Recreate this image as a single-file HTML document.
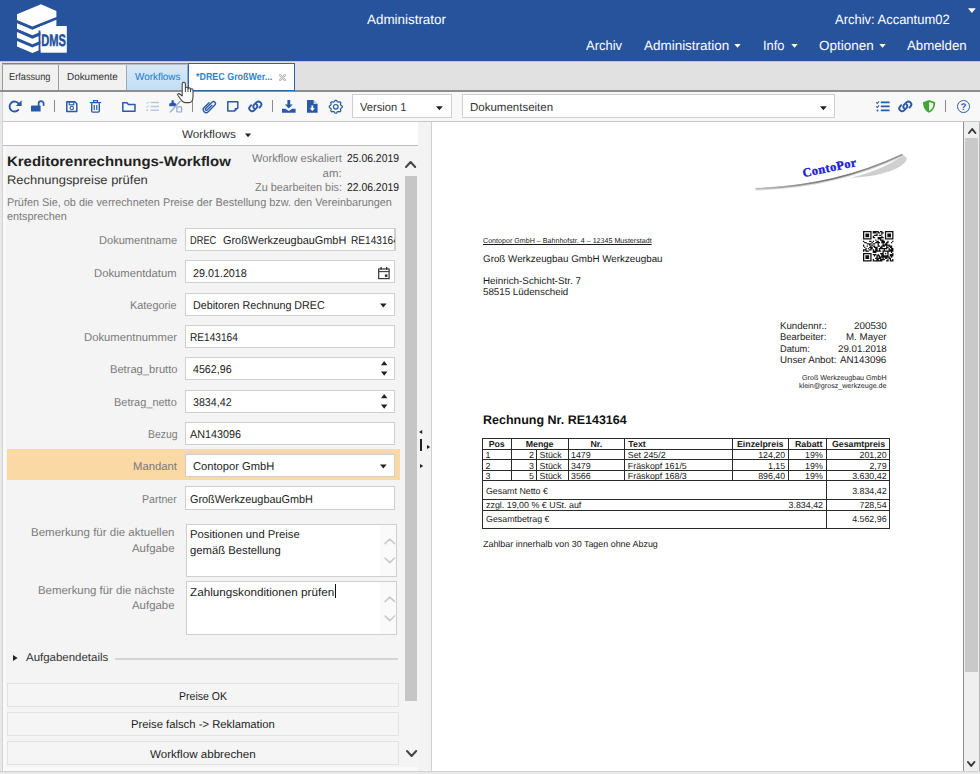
<!DOCTYPE html>
<html><head><meta charset="utf-8"><title>DMS</title>
<style>
html,body{margin:0;padding:0;}
body{width:980px;height:774px;overflow:hidden;position:relative;background:#e9e9e9;font-family:"Liberation Sans",sans-serif;text-rendering:geometricPrecision;}
.t{position:absolute;white-space:pre;line-height:20px;transform-origin:0 0;}
.b{position:absolute;box-sizing:border-box;}
svg{position:absolute;overflow:visible;}
</style></head><body>
<div class="b" style="left:0.00px;top:0.00px;width:980.00px;height:60.80px;background:#26539b;"></div>
<div class="b" style="left:0.00px;top:60.80px;width:980.00px;height:1.60px;background:#c3c5c8;"></div>
<div class="b" style="left:0.00px;top:62.40px;width:980.00px;height:28.00px;background:#e1e1e1;"></div>
<div class="b" style="left:0.00px;top:90.00px;width:980.00px;height:31.80px;background:#f8f8f8;border-bottom:1.4px solid #c6c6c6;"></div>
<div class="b" style="left:0.00px;top:62.00px;width:2.20px;height:712.00px;background:#e8e8e8;"></div>
<div class="b" style="left:2.20px;top:62.00px;width:0.80px;height:712.00px;background:#d2d2d2;"></div>
<span class="t" style="left:366.50px;top:10px;font-size:13.6px;color:#fff;transform:scaleX(0.9861);">Administrator</span>
<span class="t" style="left:835.10px;top:10px;font-size:13.6px;color:#fff;transform:scaleX(0.9543);">Archiv: Accantum02</span>
<span class="t" style="left:586.10px;top:36px;font-size:13.4px;color:#fff;transform:scaleX(0.9697);">Archiv</span>
<span class="t" style="left:643.70px;top:36px;font-size:13.4px;color:#fff;transform:scaleX(1.0047);">Administration</span>
<span class="t" style="left:762.70px;top:36px;font-size:13.4px;color:#fff;transform:scaleX(0.9619);">Info</span>
<span class="t" style="left:818.80px;top:36px;font-size:13.4px;color:#fff;transform:scaleX(1.0058);">Optionen</span>
<span class="t" style="left:907.00px;top:36px;font-size:13.4px;color:#fff;transform:scaleX(0.9894);">Abmelden</span>
<svg style="left:734.2px;top:43.6px" width="7" height="3.8" viewBox="0 0 10 6"><path d="M0 0H10L5 6Z" fill="#fff"/></svg>
<svg style="left:791.0px;top:43.6px" width="7" height="3.8" viewBox="0 0 10 6"><path d="M0 0H10L5 6Z" fill="#fff"/></svg>
<svg style="left:879.4px;top:43.6px" width="7" height="3.8" viewBox="0 0 10 6"><path d="M0 0H10L5 6Z" fill="#fff"/></svg>
<svg style="left:967.8px;top:8.2px" width="7.8" height="5.4" viewBox="0 0 10 6"><path d="M0 0H10L5 6Z" fill="#fff"/></svg>
<div class="b" style="left:1.80px;top:63.50px;width:57.40px;height:27.00px;background:#f1f1f1;border:1px solid #9a9a9a;border-bottom:none;"></div>
<div class="b" style="left:58.20px;top:63.50px;width:69.00px;height:27.00px;background:#f1f1f1;border:1px solid #9a9a9a;border-bottom:none;"></div>
<div class="b" style="left:126.20px;top:63.50px;width:62.00px;height:27.00px;background:linear-gradient(#d6e9f8,#c2def4);border:1px solid #9ab;border-bottom:none;"></div>
<div class="b" style="left:1.80px;top:63.00px;width:186.00px;height:1.00px;background:#848484;"></div>
<div class="b" style="left:1.80px;top:64.00px;width:186.00px;height:1.00px;background:#bdbdbd;"></div>
<div class="b" style="left:0.00px;top:90.00px;width:980.00px;height:1.60px;background:#8e8e8e;"></div>
<div class="b" style="left:187.60px;top:63.20px;width:107.20px;height:28.00px;background:#fff;border:1.5px solid #3560ac;"></div>
<span class="t" style="left:9.30px;top:68px;font-size:10.1px;color:#333;transform:scaleX(0.9126);">Erfassung</span>
<span class="t" style="left:67.30px;top:68px;font-size:10.1px;color:#333;transform:scaleX(0.9816);">Dokumente</span>
<span class="t" style="left:134.70px;top:68px;font-size:10.1px;color:#1c78c8;transform:scaleX(0.9808);">Workflows</span>
<span class="t" style="left:196.30px;top:68px;font-size:10.2px;color:#2b86d2;transform:scaleX(0.8749);font-weight:bold;">*DREC GroßWer...</span>
<div class="b" style="left:3.00px;top:121.50px;width:415.20px;height:649.20px;background:#f4f4f4;border-left:3.4px solid #f9f9f9;border-bottom:4.4px solid #f9f9f9;"></div>
<div class="b" style="left:2.60px;top:121.50px;width:415.60px;height:24.40px;background:#fff;border-bottom:1.4px solid #bdbdbd;"></div>
<span class="t" style="left:182.00px;top:125px;font-size:11.4px;color:#333;transform:scaleX(1.0274);">Workflows</span>
<svg style="left:244.5px;top:132.6px" width="6.1" height="4.8" viewBox="0 0 10 6"><path d="M0 0H10L5 6Z" fill="#222"/></svg>
<span class="t" style="left:7.20px;top:152px;font-size:13.8px;color:#222;transform:scaleX(1.0824);font-weight:bold;">Kreditorenrechnungs-Workflow</span>
<span class="t" style="left:7.20px;top:170px;font-size:12.3px;color:#333;transform:scaleX(1.0506);">Rechnungspreise prüfen</span>
<span class="t" style="left:7.20px;top:193px;font-size:11.2px;color:#7a7a7a;transform:scaleX(0.9715);">Prüfen Sie, ob die verrechneten Preise der Bestellung bzw. den Vereinbarungen</span>
<span class="t" style="left:7.20px;top:207px;font-size:11.2px;color:#7a7a7a;transform:scaleX(0.9701);">entsprechen</span>
<span class="t" style="left:251.60px;top:149px;font-size:11.4px;color:#7a7a7a;transform:scaleX(0.9753);">Workflow eskaliert</span>
<span class="t" style="left:322.60px;top:164px;font-size:11.4px;color:#7a7a7a;">am:</span>
<span class="t" style="left:254.50px;top:178px;font-size:11.4px;color:#7a7a7a;transform:scaleX(0.9545);">Zu bearbeiten bis:</span>
<span class="t" style="left:347.30px;top:149px;font-size:11.4px;color:#222;transform:scaleX(0.9114);">25.06.2019</span>
<span class="t" style="left:347.30px;top:178px;font-size:11.4px;color:#222;transform:scaleX(0.9114);">22.06.2019</span>
<div class="b" style="left:404.90px;top:176.00px;width:12.30px;height:524.70px;background:#c6c6c6;"></div>
<svg style="left:406.4px;top:161.6px" width="9.2" height="5.0"><path d="M0 5.0 L4.6 0 L9.2 5.0" fill="none" stroke="#444" stroke-width="2.0" stroke-linecap="round" stroke-linejoin="round"/></svg>
<svg style="left:406.5px;top:751px" width="9.2" height="5.0"><path d="M0 0 L4.6 5.0 L9.2 0" fill="none" stroke="#444" stroke-width="2.0" stroke-linecap="round" stroke-linejoin="round"/></svg>
<div class="b" style="left:7.20px;top:448.70px;width:392.60px;height:31.60px;background:#fbd9a4;"></div>
<div class="b" style="left:185.20px;top:228.00px;width:210.30px;height:23.20px;background:#fff;border:1px solid #cfcfcf;overflow:hidden;"></div>
<span class="t" style="left:98.80px;top:231px;font-size:11.4px;color:#7a7a7a;transform:scaleX(0.9717);">Dokumentname</span>
<span class="t" style="left:189.60px;top:231px;font-size:11.3px;color:#222;transform:scaleX(0.8214);">DREC</span>
<span class="t" style="left:222.50px;top:231px;font-size:11.3px;color:#222;transform:scaleX(0.9640);">GroßWerkzeugbauGmbH</span>
<span class="t" style="left:351.00px;top:231px;font-size:11.3px;color:#222;transform:scaleX(0.8969);">RE143164</span>
<div class="b" style="left:394.50px;top:228.00px;width:10.00px;height:23.20px;background:#f4f4f4;"></div>
<div class="b" style="left:394.50px;top:228.00px;width:1.00px;height:23.20px;background:#cfcfcf;"></div>
<div class="b" style="left:185.20px;top:260.30px;width:210.30px;height:23.20px;background:#fff;border:1px solid #cfcfcf;overflow:hidden;"></div>
<span class="t" style="left:94.30px;top:264px;font-size:11.4px;color:#7a7a7a;transform:scaleX(0.9887);">Dokumentdatum</span>
<span class="t" style="left:192.70px;top:264px;font-size:11.3px;color:#222;transform:scaleX(0.9513);">29.01.2018</span>
<svg style="left:377.8px;top:266.90000000000003px" width="11.8" height="12.4" viewBox="0 0 12 12.4"><rect x="0.7" y="1.9" width="10.6" height="9.8" fill="none" stroke="#333" stroke-width="1.2"/><path d="M0.7 4.6H11.3" stroke="#333" stroke-width="1.1"/><path d="M3.2 0V2.6M8.8 0V2.6" stroke="#333" stroke-width="1.3"/><rect x="7" y="7.4" width="2.6" height="2.6" fill="#333"/></svg>
<div class="b" style="left:185.20px;top:292.60px;width:210.30px;height:23.20px;background:#fff;border:1px solid #cfcfcf;overflow:hidden;"></div>
<span class="t" style="left:130.40px;top:296px;font-size:11.4px;color:#7a7a7a;transform:scaleX(0.9549);">Kategorie</span>
<span class="t" style="left:192.70px;top:296px;font-size:11.3px;color:#222;transform:scaleX(0.9495);">Debitoren Rechnung DREC</span>
<svg style="left:380.4px;top:302.6px" width="6.6" height="5.2" viewBox="0 0 10 6"><path d="M0 0H10L5 6Z" fill="#222"/></svg>
<div class="b" style="left:185.20px;top:324.90px;width:210.30px;height:23.20px;background:#fff;border:1px solid #cfcfcf;overflow:hidden;"></div>
<span class="t" style="left:84.00px;top:328px;font-size:11.4px;color:#7a7a7a;transform:scaleX(0.9918);">Dokumentnummer</span>
<span class="t" style="left:189.60px;top:328px;font-size:11.3px;color:#222;transform:scaleX(0.8969);">RE143164</span>
<div class="b" style="left:185.20px;top:357.20px;width:210.30px;height:23.20px;background:#fff;border:1px solid #cfcfcf;overflow:hidden;"></div>
<span class="t" style="left:109.50px;top:360px;font-size:11.4px;color:#7a7a7a;transform:scaleX(0.9771);">Betrag_brutto</span>
<span class="t" style="left:192.70px;top:360px;font-size:11.3px;color:#222;transform:scaleX(0.9450);">4562,96</span>
<svg style="left:380.7px;top:361.4px" width="6.4" height="15"><path d="M0 4.2H6.4L3.2 0Z M0 10.6H6.4L3.2 14.8Z" fill="#222"/></svg>
<div class="b" style="left:185.20px;top:389.50px;width:210.30px;height:23.20px;background:#fff;border:1px solid #cfcfcf;overflow:hidden;"></div>
<span class="t" style="left:114.20px;top:393px;font-size:11.4px;color:#7a7a7a;transform:scaleX(0.9620);">Betrag_netto</span>
<span class="t" style="left:192.70px;top:393px;font-size:11.3px;color:#222;transform:scaleX(0.9450);">3834,42</span>
<svg style="left:380.7px;top:393.7px" width="6.4" height="15"><path d="M0 4.2H6.4L3.2 0Z M0 10.6H6.4L3.2 14.8Z" fill="#222"/></svg>
<div class="b" style="left:185.20px;top:421.80px;width:210.30px;height:23.20px;background:#fff;border:1px solid #cfcfcf;overflow:hidden;"></div>
<span class="t" style="left:147.50px;top:425px;font-size:11.4px;color:#7a7a7a;transform:scaleX(0.9126);">Bezug</span>
<span class="t" style="left:189.60px;top:425px;font-size:11.3px;color:#222;transform:scaleX(0.9531);">AN143096</span>
<div class="b" style="left:185.20px;top:454.10px;width:210.30px;height:23.20px;background:#fff;border:1px solid #cfcfcf;overflow:hidden;"></div>
<span class="t" style="left:133.00px;top:457px;font-size:11.4px;color:#7a7a7a;transform:scaleX(0.9918);">Mandant</span>
<span class="t" style="left:192.70px;top:457px;font-size:11.3px;color:#222;transform:scaleX(0.9882);">Contopor GmbH</span>
<svg style="left:380.4px;top:464.09999999999997px" width="6.6" height="5.2" viewBox="0 0 10 6"><path d="M0 0H10L5 6Z" fill="#222"/></svg>
<div class="b" style="left:185.20px;top:486.40px;width:210.30px;height:23.20px;background:#fff;border:1px solid #cfcfcf;overflow:hidden;"></div>
<span class="t" style="left:142.20px;top:490px;font-size:11.4px;color:#7a7a7a;transform:scaleX(0.9309);">Partner</span>
<span class="t" style="left:189.60px;top:490px;font-size:11.3px;color:#222;transform:scaleX(0.9609);">GroßWerkzeugbauGmbH</span>
<div class="b" style="left:186.20px;top:523.60px;width:210.70px;height:53.60px;background:#fff;border:1px solid #cfcfcf;"></div>
<div class="b" style="left:186.20px;top:581.40px;width:210.70px;height:53.30px;background:#fff;border:1px solid #cfcfcf;"></div>
<div class="b" style="left:379.70px;top:524.60px;width:16.20px;height:51.60px;background:#fafafa;"></div>
<div class="b" style="left:379.70px;top:582.40px;width:16.20px;height:51.30px;background:#fafafa;"></div>
<svg style="left:384.8px;top:538.6px" width="9.6" height="4.6"><path d="M0 4.6 L4.8 0 L9.6 4.6" fill="none" stroke="#c8c8c8" stroke-width="1.5" stroke-linecap="round" stroke-linejoin="round"/></svg>
<svg style="left:384.8px;top:557.8px" width="9.6" height="4.6"><path d="M0 0 L4.8 4.6 L9.6 0" fill="none" stroke="#c8c8c8" stroke-width="1.5" stroke-linecap="round" stroke-linejoin="round"/></svg>
<svg style="left:384.8px;top:596.6px" width="9.6" height="4.6"><path d="M0 4.6 L4.8 0 L9.6 4.6" fill="none" stroke="#c8c8c8" stroke-width="1.5" stroke-linecap="round" stroke-linejoin="round"/></svg>
<svg style="left:384.8px;top:615.8px" width="9.6" height="4.6"><path d="M0 0 L4.8 4.6 L9.6 0" fill="none" stroke="#c8c8c8" stroke-width="1.5" stroke-linecap="round" stroke-linejoin="round"/></svg>
<span class="t" style="left:31.40px;top:523px;font-size:11.4px;color:#7a7a7a;transform:scaleX(1.0116);">Bemerkung für die aktuellen</span>
<span class="t" style="left:132.40px;top:539px;font-size:11.4px;color:#7a7a7a;transform:scaleX(1.0030);">Aufgabe</span>
<span class="t" style="left:38.40px;top:581px;font-size:11.4px;color:#7a7a7a;transform:scaleX(1.0026);">Bemerkung für die nächste</span>
<span class="t" style="left:132.40px;top:596px;font-size:11.4px;color:#7a7a7a;transform:scaleX(1.0030);">Aufgabe</span>
<span class="t" style="left:190.40px;top:525px;font-size:11.3px;color:#222;transform:scaleX(0.9988);">Positionen und Preise</span>
<span class="t" style="left:190.40px;top:541px;font-size:11.3px;color:#222;transform:scaleX(0.9980);">gemäß Bestellung</span>
<span class="t" style="left:190.40px;top:583px;font-size:11.3px;color:#222;transform:scaleX(1.0346);">Zahlungskonditionen prüfen</span>
<div class="b" style="left:335.20px;top:583.60px;width:1.00px;height:14.40px;background:#111;"></div>
<svg style="left:13.2px;top:654.6px" width="4.6" height="6"><path d="M0 0L4.6 3L0 6Z" fill="#222"/></svg>
<span class="t" style="left:25.70px;top:648px;font-size:11.4px;color:#333;transform:scaleX(1.0065);">Aufgabendetails</span>
<div class="b" style="left:114.60px;top:658.40px;width:283.80px;height:1.20px;background:#d4d4d4;"></div>
<div class="b" style="left:7.20px;top:683.20px;width:392.20px;height:23.50px;background:#f5f5f5;border:1px solid #e3e3e3;"></div>
<div class="b" style="left:7.20px;top:712.30px;width:392.20px;height:23.50px;background:#f5f5f5;border:1px solid #e3e3e3;"></div>
<div class="b" style="left:7.20px;top:741.30px;width:392.20px;height:23.50px;background:#f5f5f5;border:1px solid #e3e3e3;"></div>
<span class="t" style="left:179.00px;top:687px;font-size:11.4px;color:#222;transform:scaleX(0.9239);">Preise OK</span>
<span class="t" style="left:131.00px;top:715px;font-size:11.4px;color:#222;transform:scaleX(0.9896);">Preise falsch -&gt; Reklamation</span>
<span class="t" style="left:150.30px;top:745px;font-size:11.4px;color:#222;transform:scaleX(1.0192);">Workflow abbrechen</span>
<div class="b" style="left:0.00px;top:770.60px;width:980.00px;height:1.20px;background:#d2d2d2;"></div>
<div class="b" style="left:0.00px;top:771.80px;width:980.00px;height:2.20px;background:#e8e8e8;"></div>
<div class="b" style="left:418.20px;top:121.50px;width:13.00px;height:649.20px;background:#f3f3f3;"></div>
<svg style="left:419.2px;top:429.6px" width="3.2" height="4"><path d="M3.2 0L0 2L3.2 4Z" fill="#222"/></svg>
<div class="b" style="left:419.80px;top:438.80px;width:2.40px;height:12.40px;background:#222;"></div>
<svg style="left:426.6px;top:444.6px" width="3.2" height="4"><path d="M0 0L3.2 2L0 4Z" fill="#222"/></svg>
<svg style="left:419.8px;top:463.6px" width="3.2" height="4"><path d="M0 0L3.2 2L0 4Z" fill="#222"/></svg>
<div class="b" style="left:431.00px;top:121.80px;width:533.00px;height:648.80px;background:#fff;border-left:1px solid #d0d0d0;"></div>
<div class="b" style="left:962.90px;top:121.80px;width:17.10px;height:648.80px;background:#efefef;border-left:1.1px solid #909090;border-right:0.9px solid #b4b4b4;"></div>
<div class="b" style="left:965.40px;top:137.80px;width:12.80px;height:534.10px;background:#c9c9c9;"></div>
<svg style="left:968.5px;top:128.5px" width="6.4" height="4.0"><path d="M0 4.0 L3.2 0 L6.4 4.0" fill="none" stroke="#3a3a3a" stroke-width="2.0" stroke-linecap="round" stroke-linejoin="round"/></svg>
<svg style="left:968.3px;top:762px" width="6.4" height="4.0"><path d="M0 0 L3.2 4.0 L6.4 0" fill="none" stroke="#3a3a3a" stroke-width="2.0" stroke-linecap="round" stroke-linejoin="round"/></svg>
<span class="t" style="left:482.80px;top:231px;font-size:7.14px;color:#1a1a1a;transform:scaleX(0.9995);text-decoration:underline;">Contopor GmbH – Bahnhofstr. 4 – 12345 Musterstadt</span>
<span class="t" style="left:482.80px;top:250px;font-size:9.8px;color:#1a1a1a;transform:scaleX(1.0012);">Groß Werkzeugbau GmbH Werkzeugbau</span>
<span class="t" style="left:482.80px;top:272px;font-size:9.8px;color:#1a1a1a;transform:scaleX(1.0042);">Heinrich-Schicht-Str. 7</span>
<span class="t" style="left:482.80px;top:283px;font-size:9.8px;color:#1a1a1a;transform:scaleX(0.9970);">58515 Lüdenscheid</span>
<span class="t" style="left:779.60px;top:317px;font-size:9.8px;color:#1a1a1a;transform:scaleX(0.9872);">Kundennr.:</span>
<span class="t" style="left:853.90px;top:317px;font-size:9.8px;color:#1a1a1a;transform:scaleX(1.0030);">200530</span>
<span class="t" style="left:779.60px;top:328px;font-size:9.8px;color:#1a1a1a;transform:scaleX(0.9679);">Bearbeiter:</span>
<span class="t" style="left:846.10px;top:328px;font-size:9.8px;color:#1a1a1a;transform:scaleX(0.9942);">M. Mayer</span>
<span class="t" style="left:779.60px;top:340px;font-size:9.8px;color:#1a1a1a;transform:scaleX(0.9466);">Datum:</span>
<span class="t" style="left:837.90px;top:340px;font-size:9.8px;color:#1a1a1a;transform:scaleX(0.9949);">29.01.2018</span>
<span class="t" style="left:779.60px;top:351px;font-size:9.8px;color:#1a1a1a;transform:scaleX(0.9955);">Unser Anbot:</span>
<span class="t" style="left:840.40px;top:351px;font-size:9.8px;color:#1a1a1a;transform:scaleX(0.9997);">AN143096</span>
<span class="t" style="left:801.90px;top:368px;font-size:7.14px;color:#1a1a1a;transform:scaleX(1.0002);">Groß Werkzeugbau GmbH</span>
<span class="t" style="left:799.00px;top:376px;font-size:7.14px;color:#1a1a1a;transform:scaleX(0.9987);">klein@grosz_werkzeuge.de</span>
<span class="t" style="left:482.80px;top:410px;font-size:12.5px;color:#111;transform:scaleX(0.9993);font-weight:bold;">Rechnung Nr. RE143164</span>
<span class="t" style="left:482.80px;top:534px;font-size:8.9px;color:#1a1a1a;transform:scaleX(1.0045);">Zahlbar innerhalb von 30 Tagen ohne Abzug</span>
<div class="b" style="left:482.30px;top:438.10px;width:407.60px;height:1.00px;background:#2a2a2a;"></div>
<div class="b" style="left:482.30px;top:448.50px;width:407.60px;height:1.00px;background:#2a2a2a;"></div>
<div class="b" style="left:482.30px;top:459.10px;width:407.60px;height:1.00px;background:#2a2a2a;"></div>
<div class="b" style="left:482.30px;top:469.80px;width:407.60px;height:1.00px;background:#2a2a2a;"></div>
<div class="b" style="left:482.30px;top:480.40px;width:407.60px;height:1.00px;background:#2a2a2a;"></div>
<div class="b" style="left:482.30px;top:499.00px;width:407.60px;height:1.00px;background:#2a2a2a;"></div>
<div class="b" style="left:482.30px;top:509.50px;width:407.60px;height:1.00px;background:#2a2a2a;"></div>
<div class="b" style="left:482.30px;top:527.90px;width:407.60px;height:1.00px;background:#2a2a2a;"></div>
<div class="b" style="left:481.80px;top:438.60px;width:1.00px;height:89.80px;background:#2a2a2a;"></div>
<div class="b" style="left:889.40px;top:438.60px;width:1.00px;height:89.80px;background:#2a2a2a;"></div>
<div class="b" style="left:510.60px;top:438.60px;width:1.00px;height:42.30px;background:#2a2a2a;"></div>
<div class="b" style="left:567.60px;top:438.60px;width:1.00px;height:42.30px;background:#2a2a2a;"></div>
<div class="b" style="left:624.00px;top:438.60px;width:1.00px;height:42.30px;background:#2a2a2a;"></div>
<div class="b" style="left:731.60px;top:438.60px;width:1.00px;height:42.30px;background:#2a2a2a;"></div>
<div class="b" style="left:787.90px;top:438.60px;width:1.00px;height:42.30px;background:#2a2a2a;"></div>
<div class="b" style="left:535.70px;top:449.00px;width:1.00px;height:31.90px;background:#2a2a2a;"></div>
<div class="b" style="left:825.90px;top:438.60px;width:1.00px;height:89.80px;background:#2a2a2a;"></div>
<span class="t" style="left:488.63px;top:434px;font-size:8.8px;color:#1a1a1a;font-weight:bold;">Pos</span>
<span class="t" style="left:525.67px;top:434px;font-size:8.8px;color:#1a1a1a;font-weight:bold;">Menge</span>
<span class="t" style="left:590.43px;top:434px;font-size:8.8px;color:#1a1a1a;font-weight:bold;">Nr.</span>
<span class="t" style="left:628.30px;top:434px;font-size:8.8px;color:#1a1a1a;font-weight:bold;">Text</span>
<span class="t" style="left:737.20px;top:434px;font-size:8.8px;color:#1a1a1a;transform:scaleX(1.0008);font-weight:bold;">Einzelpreis</span>
<span class="t" style="left:794.50px;top:434px;font-size:8.8px;color:#1a1a1a;transform:scaleX(1.0007);font-weight:bold;">Rabatt</span>
<span class="t" style="left:831.50px;top:434px;font-size:8.8px;color:#1a1a1a;transform:scaleX(0.9978);font-weight:bold;">Gesamtpreis</span>
<span class="t" style="left:485.60px;top:445px;font-size:8.85px;color:#1a1a1a;">1</span>
<span class="t" style="left:528.88px;top:445px;font-size:8.85px;color:#1a1a1a;">2</span>
<span class="t" style="left:539.60px;top:445px;font-size:8.85px;color:#1a1a1a;">Stück</span>
<span class="t" style="left:571.00px;top:445px;font-size:8.85px;color:#1a1a1a;">1479</span>
<span class="t" style="left:627.80px;top:445px;font-size:8.85px;color:#1a1a1a;">Set 245/2</span>
<span class="t" style="left:758.13px;top:445px;font-size:8.85px;color:#1a1a1a;">124,20</span>
<span class="t" style="left:805.09px;top:445px;font-size:8.85px;color:#1a1a1a;">19%</span>
<span class="t" style="left:859.53px;top:445px;font-size:8.85px;color:#1a1a1a;">201,20</span>
<span class="t" style="left:485.60px;top:456px;font-size:8.85px;color:#1a1a1a;">2</span>
<span class="t" style="left:528.88px;top:456px;font-size:8.85px;color:#1a1a1a;">3</span>
<span class="t" style="left:539.60px;top:456px;font-size:8.85px;color:#1a1a1a;">Stück</span>
<span class="t" style="left:571.00px;top:456px;font-size:8.85px;color:#1a1a1a;">3479</span>
<span class="t" style="left:627.80px;top:456px;font-size:8.85px;color:#1a1a1a;">Fräskopf 161/5</span>
<span class="t" style="left:767.98px;top:456px;font-size:8.85px;color:#1a1a1a;">1,15</span>
<span class="t" style="left:805.09px;top:456px;font-size:8.85px;color:#1a1a1a;">19%</span>
<span class="t" style="left:869.38px;top:456px;font-size:8.85px;color:#1a1a1a;">2,79</span>
<span class="t" style="left:485.60px;top:466px;font-size:8.85px;color:#1a1a1a;">3</span>
<span class="t" style="left:528.88px;top:466px;font-size:8.85px;color:#1a1a1a;">5</span>
<span class="t" style="left:539.60px;top:466px;font-size:8.85px;color:#1a1a1a;">Stück</span>
<span class="t" style="left:571.00px;top:466px;font-size:8.85px;color:#1a1a1a;">3566</span>
<span class="t" style="left:627.80px;top:466px;font-size:8.85px;color:#1a1a1a;">Fräskopf 168/3</span>
<span class="t" style="left:758.13px;top:466px;font-size:8.85px;color:#1a1a1a;">896,40</span>
<span class="t" style="left:805.09px;top:466px;font-size:8.85px;color:#1a1a1a;">19%</span>
<span class="t" style="left:852.15px;top:466px;font-size:8.85px;color:#1a1a1a;">3.630,42</span>
<span class="t" style="left:486.20px;top:481px;font-size:8.85px;color:#1a1a1a;transform:scaleX(0.9988);">Gesamt Netto €</span>
<span class="t" style="left:486.20px;top:495px;font-size:8.85px;color:#1a1a1a;transform:scaleX(1.0048);">zzgl. 19,00 % € USt. auf</span>
<span class="t" style="left:486.20px;top:509px;font-size:8.85px;color:#1a1a1a;transform:scaleX(1.0007);">Gesamtbetrag €</span>
<span class="t" style="left:852.15px;top:481px;font-size:8.85px;color:#1a1a1a;">3.834,42</span>
<span class="t" style="left:788.55px;top:495px;font-size:8.85px;color:#1a1a1a;">3.834,42</span>
<span class="t" style="left:859.53px;top:495px;font-size:8.85px;color:#1a1a1a;">728,54</span>
<span class="t" style="left:852.15px;top:509px;font-size:8.85px;color:#1a1a1a;">4.562,96</span>
<div class="b" style="left:352.30px;top:94.00px;width:100.00px;height:24.00px;background:#fff;border:1px solid #cfcfcf;"></div>
<span class="t" style="left:359.80px;top:98px;font-size:11.6px;color:#333;transform:scaleX(0.9594);">Version 1</span>
<svg style="left:436.1px;top:105.6px" width="6.8" height="4.6" viewBox="0 0 10 6"><path d="M0 0H10L5 6Z" fill="#222"/></svg>
<div class="b" style="left:461.90px;top:94.00px;width:373.20px;height:24.00px;background:#fff;border:1px solid #cfcfcf;"></div>
<span class="t" style="left:469.50px;top:98px;font-size:11.6px;color:#333;transform:scaleX(0.9914);">Dokumentseiten</span>
<svg style="left:820px;top:105.6px" width="6.8" height="4.6" viewBox="0 0 10 6"><path d="M0 0H10L5 6Z" fill="#222"/></svg>
<div class="b" style="left:53.80px;top:99.60px;width:1.20px;height:12.80px;background:#8a8a8a;"></div>
<div class="b" style="left:191.60px;top:99.60px;width:1.20px;height:12.80px;background:#8a8a8a;"></div>
<div class="b" style="left:271.90px;top:99.60px;width:1.20px;height:12.80px;background:#8a8a8a;"></div>
<div class="b" style="left:944.70px;top:99.60px;width:1.20px;height:12.80px;background:#8a8a8a;"></div>
<svg style="left:8.2px;top:100px" width="13.8" height="12.6" viewBox="0 0 13.8 12.6"><path d="M10.3 9.9A5 5 0 1 1 10.6 3.6" fill="none" stroke="#2a5aa6" stroke-width="1.9" stroke-linecap="round"/><path d="M13.6 0.2V6H7.8Z" fill="#2a5aa6"/></svg>
<svg style="left:31.4px;top:100.4px" width="13.8" height="11.6" viewBox="0 0 13.8 11.6"><rect x="0" y="5.6" width="9.6" height="6" rx="0.6" fill="#2a5aa6"/><path d="M7.6 5.8V3.6A2.5 2.5 0 0 1 12.6 3.6V5.2" fill="none" stroke="#2a5aa6" stroke-width="1.7" stroke-linecap="round"/></svg>
<svg style="left:66.3px;top:100.8px" width="11.6" height="11.2" viewBox="0 0 11.6 11.2"><path d="M0.8 0.8H8.8L10.8 2.8V10.4H0.8Z" fill="none" stroke="#2a5aa6" stroke-width="1.5" stroke-linejoin="round"/><rect x="3.2" y="1" width="4.6" height="2.8" fill="none" stroke="#2a5aa6" stroke-width="1.1"/><circle cx="5.8" cy="7" r="1.7" fill="none" stroke="#2a5aa6" stroke-width="1.1"/></svg>
<svg style="left:89.9px;top:100px" width="11" height="12.8" viewBox="0 0 11 12.8"><path d="M0.4 2.6H10.6" stroke="#2a5aa6" stroke-width="1.4" stroke-linecap="round"/><path d="M3.6 2.4V0.7H7.4V2.4" fill="none" stroke="#2a5aa6" stroke-width="1.3"/><path d="M1.7 3.2V11A1.1 1.1 0 0 0 2.8 12.1H8.2A1.1 1.1 0 0 0 9.3 11V3.2" fill="none" stroke="#2a5aa6" stroke-width="1.4"/><path d="M4.2 5V10M6.8 5V10" stroke="#2a5aa6" stroke-width="1.2"/></svg>
<svg style="left:122.2px;top:101.6px" width="13.8" height="10" viewBox="0 0 13.8 10"><path d="M0.8 9.2V0.8H5L6.4 2.4H13V9.2Z" fill="none" stroke="#2a5aa6" stroke-width="1.5" stroke-linejoin="round"/></svg>
<svg style="left:145.8px;top:101.2px" width="13.2" height="10.8" viewBox="0 0 13.2 10.8"><path d="M4.6 1.6H13M4.6 5.4H13M4.6 9.2H13" stroke="#b9c6dc" stroke-width="1.5"/><path d="M0.2 1.6L1.2 2.6L2.8 0.6M0.2 5.4L1.2 6.4L2.8 4.4" fill="none" stroke="#b9c6dc" stroke-width="1"/><circle cx="1.4" cy="9.2" r="0.9" fill="#b9c6dc"/></svg>
<svg style="left:169px;top:100px" width="13.4" height="12.8" viewBox="0 0 13.4 12.8"><path d="M2.6 0.2H4.8V2.6L6.6 3.4H7.2V6.2H0.2V3.4H0.8L2.6 2.6Z" fill="#2a5aa6"/><path d="M11.4 1L1 12.4" stroke="#8fa6cc" stroke-width="1.3"/><rect x="7.8" y="6.8" width="4.8" height="5.2" rx="0.8" fill="none" stroke="#8fa6cc" stroke-width="1.2"/></svg>
<svg style="left:202.9px;top:100px" width="12.8" height="12.8" viewBox="0 0 12.8 12.8"><g transform="rotate(45 6.4 6.4)"><path d="M3.4 3.6V10.6A2.9 2.9 0 0 0 9.2 10.6V1.2A2 2 0 0 0 5.2 1.2V10.2A1 1 0 0 0 7.2 10.2V3.4" fill="none" stroke="#2a5aa6" stroke-width="1.35" stroke-linecap="round" transform="translate(0.1,0.4)"/></g></svg>
<svg style="left:226.5px;top:101.2px" width="11.6" height="10.8" viewBox="0 0 11.6 10.8"><path d="M0.8 0.8H10.8V7L7.6 10H0.8Z" fill="none" stroke="#2a5aa6" stroke-width="1.5" stroke-linejoin="round"/><path d="M10.8 7H7.6V10Z" fill="#2a5aa6"/></svg>
<svg style="left:248.3px;top:100px" width="14.6" height="12.8" viewBox="0 0 14.6 12.8"><g fill="none" stroke="#2a5aa6" stroke-width="1.9" stroke-linecap="round"><path d="M6.2 8.6A2.9 2.9 0 0 1 6.2 4.6L8.4 2.4A2.9 2.9 0 0 1 12.5 6.5L11.4 7.6"/><path d="M8.4 4.2A2.9 2.9 0 0 1 8.4 8.2L6.2 10.4A2.9 2.9 0 0 1 2.1 6.3L3.2 5.2"/></g></svg>
<svg style="left:282.4px;top:100px" width="13.6" height="12.8" viewBox="0 0 13.6 12.8"><path d="M5.4 0H8.2V4.4H10.8L6.8 8.6L2.8 4.4H5.4Z" fill="#2a5aa6"/><path d="M0 8.8H3.4L6.8 11L10.2 8.8H13.6V12.8H0Z" fill="#2a5aa6"/></svg>
<svg style="left:307.2px;top:100px" width="10.6" height="12.8" viewBox="0 0 10.6 12.8"><path d="M0 0H6.6L10.6 4V12.8H0Z" fill="#2a5aa6"/><path d="M6.6 0V4H10.6Z" fill="#f8f8f8" opacity="0.75"/><path d="M4.4 5.6H6.2V8.2H7.9L5.3 11L2.7 8.2H4.4Z" fill="#fff"/></svg>
<svg style="left:328.9px;top:99.6px" width="13.6" height="13.6" viewBox="0 0 13.6 13.6"><path d="M6.09 0.34 L7.51 0.34 L8.28 1.71 L9.35 2.16 L10.86 1.73 L11.87 2.74 L11.44 4.25 L11.89 5.32 L13.26 6.09 L13.26 7.51 L11.89 8.28 L11.44 9.35 L11.87 10.86 L10.86 11.87 L9.35 11.44 L8.28 11.89 L7.51 13.26 L6.09 13.26 L5.32 11.89 L4.25 11.44 L2.74 11.87 L1.73 10.86 L2.16 9.35 L1.71 8.28 L0.34 7.51 L0.34 6.09 L1.71 5.32 L2.16 4.25 L1.73 2.74 L2.74 1.73 L4.25 2.16 L5.32 1.71Z" fill="none" stroke="#2a5aa6" stroke-width="1.2" stroke-linejoin="round"/><circle cx="6.8" cy="6.8" r="2.3" fill="none" stroke="#2a5aa6" stroke-width="1.2"/></svg>
<svg style="left:875.9px;top:100.8px" width="13.6" height="10.8" viewBox="0 0 13.6 10.8"><path d="M4.8 1.4H13.6M4.8 5.4H13.6M4.8 9.4H13.6" stroke="#2a5aa6" stroke-width="1.6"/><path d="M0.2 1.4L1.3 2.5L3 0.4M0.2 5.4L1.3 6.5L3 4.4" fill="none" stroke="#2a5aa6" stroke-width="1.1"/><circle cx="1.5" cy="9.4" r="1" fill="#2a5aa6"/></svg>
<svg style="left:898.4px;top:100px" width="14.6" height="12.8" viewBox="0 0 14.6 12.8"><g fill="none" stroke="#2a5aa6" stroke-width="1.9" stroke-linecap="round"><path d="M6.2 8.6A2.9 2.9 0 0 1 6.2 4.6L8.4 2.4A2.9 2.9 0 0 1 12.5 6.5L11.4 7.6"/><path d="M8.4 4.2A2.9 2.9 0 0 1 8.4 8.2L6.2 10.4A2.9 2.9 0 0 1 2.1 6.3L3.2 5.2"/></g></svg>
<svg style="left:922.7px;top:99.8px" width="12.2" height="12.8" viewBox="0 0 12.2 12.8"><path d="M6.1 0L12.2 2.2C12.2 7.4 9.8 11 6.1 12.8C2.4 11 0 7.4 0 2.2Z" fill="#3fa535"/><path d="M6.1 1.9L10.4 3.4C10.3 7 8.8 9.5 6.1 10.9Z" fill="#f8f8f8"/></svg>
<div class="b" style="left:956.8px;top:99.9px;width:12.8px;height:12.8px;border:1.4px solid #2a5aa6;border-radius:50%;"></div>
<span class="t" style="left:960.60px;top:98px;font-size:9.6px;color:#2a5aa6;font-weight:bold;">?</span>
<svg style="left:278.6px;top:73.6px" width="7" height="7" viewBox="0 0 7 7"><path d="M1 1L6 6M6 1L1 6" stroke="#b5b5b5" stroke-width="2.2" stroke-linecap="round"/><path d="M1 1L6 6M6 1L1 6" stroke="#ececec" stroke-width="0.8" stroke-linecap="round"/></svg>
<svg style="left:0;top:0" width="80" height="60" viewBox="0 0 80 60"><path d="M17 14.3L41 4.3L56.4 10.9V16.9L32.4 26.4L17 20.0Z" fill="#fff"/><path d="M17 23.2L32.4 29.8L56.4 19.8V25.4L32.4 35.3L17 28.8Z" fill="#fff"/><path d="M17 32.1L32.4 38.7L56.4 28.7V34.3L32.4 44.2L17 37.7Z" fill="#fff"/><path d="M17 41.0L32.4 47.6L56.4 37.6V43.2L32.4 53.1L17 46.6Z" fill="#fff"/><rect x="40.4" y="26" width="26.4" height="26.7" fill="#fff"/><rect x="38.6" y="30.5" width="1.8" height="22.5" fill="#26539b"/><text x="41.2" y="46.1" font-family="Liberation Sans" font-weight="bold" font-size="16.8" fill="#23509a" stroke="#23509a" stroke-width="0.5" textLength="24.6" lengthAdjust="spacingAndGlyphs">DMS</text></svg>
<svg style="left:745px;top:140px" width="170" height="60" viewBox="745 140 170 60">
<defs><linearGradient id="sg" x1="0" y1="0" x2="1" y2="0"><stop offset="0" stop-color="#bdbdbd"/><stop offset="0.5" stop-color="#777"/><stop offset="1" stop-color="#999"/></linearGradient></defs>
<path d="M850.8 177.8Q880 170.8 903.5 155.4L906.6 157.6Q907.4 162 900 166.4Q884 176 850.8 177.8Z" fill="#cfcfcf"/>
<path d="M756.3 189.2Q834.3 187.4 902.4 155.2" fill="none" stroke="#d9d9d9" stroke-width="2.4" stroke-linecap="round"/>
<path d="M756.3 188.6Q834.3 186.4 902 154.7" fill="none" stroke="url(#sg)" stroke-width="1.5" stroke-linecap="round"/>
<text transform="translate(803.4,177.2) rotate(-11.8)" font-family="Liberation Serif" font-weight="bold" font-size="12.4" fill="#1b1bd6" stroke="#1b1bd6" stroke-width="0.35" textLength="54.6" lengthAdjust="spacing">ContoPor</text>
</svg>
<svg style="left:863.1px;top:230.9px" width="30.5" height="30.5"><path d="M0.00 0.00h1.27v1.27h-1.27zM1.22 0.00h1.27v1.27h-1.27zM2.43 0.00h1.27v1.27h-1.27zM3.65 0.00h1.27v1.27h-1.27zM4.86 0.00h1.27v1.27h-1.27zM6.08 0.00h1.27v1.27h-1.27zM7.30 0.00h1.27v1.27h-1.27zM9.73 0.00h1.27v1.27h-1.27zM10.94 0.00h1.27v1.27h-1.27zM12.16 0.00h1.27v1.27h-1.27zM13.38 0.00h1.27v1.27h-1.27zM14.59 0.00h1.27v1.27h-1.27zM17.02 0.00h1.27v1.27h-1.27zM18.24 0.00h1.27v1.27h-1.27zM21.89 0.00h1.27v1.27h-1.27zM23.10 0.00h1.27v1.27h-1.27zM24.32 0.00h1.27v1.27h-1.27zM25.54 0.00h1.27v1.27h-1.27zM26.75 0.00h1.27v1.27h-1.27zM27.97 0.00h1.27v1.27h-1.27zM29.18 0.00h1.27v1.27h-1.27zM0.00 1.22h1.27v1.27h-1.27zM7.30 1.22h1.27v1.27h-1.27zM9.73 1.22h1.27v1.27h-1.27zM10.94 1.22h1.27v1.27h-1.27zM12.16 1.22h1.27v1.27h-1.27zM14.59 1.22h1.27v1.27h-1.27zM15.81 1.22h1.27v1.27h-1.27zM18.24 1.22h1.27v1.27h-1.27zM19.46 1.22h1.27v1.27h-1.27zM21.89 1.22h1.27v1.27h-1.27zM29.18 1.22h1.27v1.27h-1.27zM0.00 2.43h1.27v1.27h-1.27zM2.43 2.43h1.27v1.27h-1.27zM3.65 2.43h1.27v1.27h-1.27zM4.86 2.43h1.27v1.27h-1.27zM7.30 2.43h1.27v1.27h-1.27zM13.38 2.43h1.27v1.27h-1.27zM18.24 2.43h1.27v1.27h-1.27zM21.89 2.43h1.27v1.27h-1.27zM24.32 2.43h1.27v1.27h-1.27zM25.54 2.43h1.27v1.27h-1.27zM26.75 2.43h1.27v1.27h-1.27zM29.18 2.43h1.27v1.27h-1.27zM0.00 3.65h1.27v1.27h-1.27zM2.43 3.65h1.27v1.27h-1.27zM3.65 3.65h1.27v1.27h-1.27zM4.86 3.65h1.27v1.27h-1.27zM7.30 3.65h1.27v1.27h-1.27zM10.94 3.65h1.27v1.27h-1.27zM12.16 3.65h1.27v1.27h-1.27zM13.38 3.65h1.27v1.27h-1.27zM15.81 3.65h1.27v1.27h-1.27zM17.02 3.65h1.27v1.27h-1.27zM21.89 3.65h1.27v1.27h-1.27zM24.32 3.65h1.27v1.27h-1.27zM25.54 3.65h1.27v1.27h-1.27zM26.75 3.65h1.27v1.27h-1.27zM29.18 3.65h1.27v1.27h-1.27zM0.00 4.86h1.27v1.27h-1.27zM2.43 4.86h1.27v1.27h-1.27zM3.65 4.86h1.27v1.27h-1.27zM4.86 4.86h1.27v1.27h-1.27zM7.30 4.86h1.27v1.27h-1.27zM9.73 4.86h1.27v1.27h-1.27zM18.24 4.86h1.27v1.27h-1.27zM21.89 4.86h1.27v1.27h-1.27zM24.32 4.86h1.27v1.27h-1.27zM25.54 4.86h1.27v1.27h-1.27zM26.75 4.86h1.27v1.27h-1.27zM29.18 4.86h1.27v1.27h-1.27zM0.00 6.08h1.27v1.27h-1.27zM7.30 6.08h1.27v1.27h-1.27zM9.73 6.08h1.27v1.27h-1.27zM10.94 6.08h1.27v1.27h-1.27zM14.59 6.08h1.27v1.27h-1.27zM15.81 6.08h1.27v1.27h-1.27zM17.02 6.08h1.27v1.27h-1.27zM18.24 6.08h1.27v1.27h-1.27zM19.46 6.08h1.27v1.27h-1.27zM21.89 6.08h1.27v1.27h-1.27zM29.18 6.08h1.27v1.27h-1.27zM0.00 7.30h1.27v1.27h-1.27zM1.22 7.30h1.27v1.27h-1.27zM2.43 7.30h1.27v1.27h-1.27zM3.65 7.30h1.27v1.27h-1.27zM4.86 7.30h1.27v1.27h-1.27zM6.08 7.30h1.27v1.27h-1.27zM7.30 7.30h1.27v1.27h-1.27zM14.59 7.30h1.27v1.27h-1.27zM15.81 7.30h1.27v1.27h-1.27zM17.02 7.30h1.27v1.27h-1.27zM21.89 7.30h1.27v1.27h-1.27zM23.10 7.30h1.27v1.27h-1.27zM24.32 7.30h1.27v1.27h-1.27zM25.54 7.30h1.27v1.27h-1.27zM26.75 7.30h1.27v1.27h-1.27zM27.97 7.30h1.27v1.27h-1.27zM29.18 7.30h1.27v1.27h-1.27zM12.16 8.51h1.27v1.27h-1.27zM17.02 8.51h1.27v1.27h-1.27zM18.24 8.51h1.27v1.27h-1.27zM19.46 8.51h1.27v1.27h-1.27zM0.00 9.73h1.27v1.27h-1.27zM6.08 9.73h1.27v1.27h-1.27zM7.30 9.73h1.27v1.27h-1.27zM9.73 9.73h1.27v1.27h-1.27zM13.38 9.73h1.27v1.27h-1.27zM14.59 9.73h1.27v1.27h-1.27zM18.24 9.73h1.27v1.27h-1.27zM19.46 9.73h1.27v1.27h-1.27zM20.67 9.73h1.27v1.27h-1.27zM24.32 9.73h1.27v1.27h-1.27zM29.18 9.73h1.27v1.27h-1.27zM1.22 10.94h1.27v1.27h-1.27zM2.43 10.94h1.27v1.27h-1.27zM8.51 10.94h1.27v1.27h-1.27zM12.16 10.94h1.27v1.27h-1.27zM13.38 10.94h1.27v1.27h-1.27zM14.59 10.94h1.27v1.27h-1.27zM15.81 10.94h1.27v1.27h-1.27zM18.24 10.94h1.27v1.27h-1.27zM19.46 10.94h1.27v1.27h-1.27zM20.67 10.94h1.27v1.27h-1.27zM23.10 10.94h1.27v1.27h-1.27zM24.32 10.94h1.27v1.27h-1.27zM27.97 10.94h1.27v1.27h-1.27zM3.65 12.16h1.27v1.27h-1.27zM4.86 12.16h1.27v1.27h-1.27zM6.08 12.16h1.27v1.27h-1.27zM7.30 12.16h1.27v1.27h-1.27zM9.73 12.16h1.27v1.27h-1.27zM10.94 12.16h1.27v1.27h-1.27zM14.59 12.16h1.27v1.27h-1.27zM19.46 12.16h1.27v1.27h-1.27zM21.89 12.16h1.27v1.27h-1.27zM23.10 12.16h1.27v1.27h-1.27zM0.00 13.38h1.27v1.27h-1.27zM6.08 13.38h1.27v1.27h-1.27zM8.51 13.38h1.27v1.27h-1.27zM14.59 13.38h1.27v1.27h-1.27zM19.46 13.38h1.27v1.27h-1.27zM20.67 13.38h1.27v1.27h-1.27zM21.89 13.38h1.27v1.27h-1.27zM23.10 13.38h1.27v1.27h-1.27zM24.32 13.38h1.27v1.27h-1.27zM25.54 13.38h1.27v1.27h-1.27zM0.00 14.59h1.27v1.27h-1.27zM3.65 14.59h1.27v1.27h-1.27zM7.30 14.59h1.27v1.27h-1.27zM9.73 14.59h1.27v1.27h-1.27zM10.94 14.59h1.27v1.27h-1.27zM14.59 14.59h1.27v1.27h-1.27zM15.81 14.59h1.27v1.27h-1.27zM18.24 14.59h1.27v1.27h-1.27zM19.46 14.59h1.27v1.27h-1.27zM20.67 14.59h1.27v1.27h-1.27zM23.10 14.59h1.27v1.27h-1.27zM25.54 14.59h1.27v1.27h-1.27zM26.75 14.59h1.27v1.27h-1.27zM27.97 14.59h1.27v1.27h-1.27zM1.22 15.81h1.27v1.27h-1.27zM6.08 15.81h1.27v1.27h-1.27zM7.30 15.81h1.27v1.27h-1.27zM8.51 15.81h1.27v1.27h-1.27zM10.94 15.81h1.27v1.27h-1.27zM12.16 15.81h1.27v1.27h-1.27zM13.38 15.81h1.27v1.27h-1.27zM17.02 15.81h1.27v1.27h-1.27zM18.24 15.81h1.27v1.27h-1.27zM23.10 15.81h1.27v1.27h-1.27zM24.32 15.81h1.27v1.27h-1.27zM26.75 15.81h1.27v1.27h-1.27zM27.97 15.81h1.27v1.27h-1.27zM2.43 17.02h1.27v1.27h-1.27zM4.86 17.02h1.27v1.27h-1.27zM7.30 17.02h1.27v1.27h-1.27zM8.51 17.02h1.27v1.27h-1.27zM12.16 17.02h1.27v1.27h-1.27zM13.38 17.02h1.27v1.27h-1.27zM15.81 17.02h1.27v1.27h-1.27zM17.02 17.02h1.27v1.27h-1.27zM18.24 17.02h1.27v1.27h-1.27zM19.46 17.02h1.27v1.27h-1.27zM20.67 17.02h1.27v1.27h-1.27zM21.89 17.02h1.27v1.27h-1.27zM23.10 17.02h1.27v1.27h-1.27zM25.54 17.02h1.27v1.27h-1.27zM27.97 17.02h1.27v1.27h-1.27zM29.18 17.02h1.27v1.27h-1.27zM0.00 18.24h1.27v1.27h-1.27zM1.22 18.24h1.27v1.27h-1.27zM2.43 18.24h1.27v1.27h-1.27zM6.08 18.24h1.27v1.27h-1.27zM7.30 18.24h1.27v1.27h-1.27zM9.73 18.24h1.27v1.27h-1.27zM12.16 18.24h1.27v1.27h-1.27zM13.38 18.24h1.27v1.27h-1.27zM15.81 18.24h1.27v1.27h-1.27zM20.67 18.24h1.27v1.27h-1.27zM25.54 18.24h1.27v1.27h-1.27zM26.75 18.24h1.27v1.27h-1.27zM27.97 18.24h1.27v1.27h-1.27zM29.18 18.24h1.27v1.27h-1.27zM0.00 19.46h1.27v1.27h-1.27zM2.43 19.46h1.27v1.27h-1.27zM3.65 19.46h1.27v1.27h-1.27zM4.86 19.46h1.27v1.27h-1.27zM9.73 19.46h1.27v1.27h-1.27zM10.94 19.46h1.27v1.27h-1.27zM12.16 19.46h1.27v1.27h-1.27zM13.38 19.46h1.27v1.27h-1.27zM14.59 19.46h1.27v1.27h-1.27zM15.81 19.46h1.27v1.27h-1.27zM17.02 19.46h1.27v1.27h-1.27zM19.46 19.46h1.27v1.27h-1.27zM20.67 19.46h1.27v1.27h-1.27zM21.89 19.46h1.27v1.27h-1.27zM23.10 19.46h1.27v1.27h-1.27zM24.32 19.46h1.27v1.27h-1.27zM25.54 19.46h1.27v1.27h-1.27zM26.75 19.46h1.27v1.27h-1.27zM27.97 19.46h1.27v1.27h-1.27zM29.18 19.46h1.27v1.27h-1.27zM9.73 20.67h1.27v1.27h-1.27zM10.94 20.67h1.27v1.27h-1.27zM12.16 20.67h1.27v1.27h-1.27zM19.46 20.67h1.27v1.27h-1.27zM24.32 20.67h1.27v1.27h-1.27zM27.97 20.67h1.27v1.27h-1.27zM0.00 21.89h1.27v1.27h-1.27zM1.22 21.89h1.27v1.27h-1.27zM2.43 21.89h1.27v1.27h-1.27zM3.65 21.89h1.27v1.27h-1.27zM4.86 21.89h1.27v1.27h-1.27zM6.08 21.89h1.27v1.27h-1.27zM7.30 21.89h1.27v1.27h-1.27zM17.02 21.89h1.27v1.27h-1.27zM18.24 21.89h1.27v1.27h-1.27zM19.46 21.89h1.27v1.27h-1.27zM21.89 21.89h1.27v1.27h-1.27zM24.32 21.89h1.27v1.27h-1.27zM29.18 21.89h1.27v1.27h-1.27zM0.00 23.10h1.27v1.27h-1.27zM7.30 23.10h1.27v1.27h-1.27zM9.73 23.10h1.27v1.27h-1.27zM10.94 23.10h1.27v1.27h-1.27zM12.16 23.10h1.27v1.27h-1.27zM14.59 23.10h1.27v1.27h-1.27zM18.24 23.10h1.27v1.27h-1.27zM19.46 23.10h1.27v1.27h-1.27zM24.32 23.10h1.27v1.27h-1.27zM26.75 23.10h1.27v1.27h-1.27zM27.97 23.10h1.27v1.27h-1.27zM29.18 23.10h1.27v1.27h-1.27zM0.00 24.32h1.27v1.27h-1.27zM2.43 24.32h1.27v1.27h-1.27zM3.65 24.32h1.27v1.27h-1.27zM4.86 24.32h1.27v1.27h-1.27zM7.30 24.32h1.27v1.27h-1.27zM10.94 24.32h1.27v1.27h-1.27zM13.38 24.32h1.27v1.27h-1.27zM14.59 24.32h1.27v1.27h-1.27zM15.81 24.32h1.27v1.27h-1.27zM18.24 24.32h1.27v1.27h-1.27zM19.46 24.32h1.27v1.27h-1.27zM20.67 24.32h1.27v1.27h-1.27zM21.89 24.32h1.27v1.27h-1.27zM23.10 24.32h1.27v1.27h-1.27zM24.32 24.32h1.27v1.27h-1.27zM26.75 24.32h1.27v1.27h-1.27zM27.97 24.32h1.27v1.27h-1.27zM29.18 24.32h1.27v1.27h-1.27zM0.00 25.54h1.27v1.27h-1.27zM2.43 25.54h1.27v1.27h-1.27zM3.65 25.54h1.27v1.27h-1.27zM4.86 25.54h1.27v1.27h-1.27zM7.30 25.54h1.27v1.27h-1.27zM13.38 25.54h1.27v1.27h-1.27zM15.81 25.54h1.27v1.27h-1.27zM17.02 25.54h1.27v1.27h-1.27zM18.24 25.54h1.27v1.27h-1.27zM19.46 25.54h1.27v1.27h-1.27zM20.67 25.54h1.27v1.27h-1.27zM21.89 25.54h1.27v1.27h-1.27zM23.10 25.54h1.27v1.27h-1.27zM24.32 25.54h1.27v1.27h-1.27zM25.54 25.54h1.27v1.27h-1.27zM27.97 25.54h1.27v1.27h-1.27zM0.00 26.75h1.27v1.27h-1.27zM2.43 26.75h1.27v1.27h-1.27zM3.65 26.75h1.27v1.27h-1.27zM4.86 26.75h1.27v1.27h-1.27zM7.30 26.75h1.27v1.27h-1.27zM12.16 26.75h1.27v1.27h-1.27zM13.38 26.75h1.27v1.27h-1.27zM14.59 26.75h1.27v1.27h-1.27zM15.81 26.75h1.27v1.27h-1.27zM17.02 26.75h1.27v1.27h-1.27zM19.46 26.75h1.27v1.27h-1.27zM21.89 26.75h1.27v1.27h-1.27zM23.10 26.75h1.27v1.27h-1.27zM25.54 26.75h1.27v1.27h-1.27zM26.75 26.75h1.27v1.27h-1.27zM0.00 27.97h1.27v1.27h-1.27zM7.30 27.97h1.27v1.27h-1.27zM9.73 27.97h1.27v1.27h-1.27zM13.38 27.97h1.27v1.27h-1.27zM14.59 27.97h1.27v1.27h-1.27zM17.02 27.97h1.27v1.27h-1.27zM18.24 27.97h1.27v1.27h-1.27zM19.46 27.97h1.27v1.27h-1.27zM20.67 27.97h1.27v1.27h-1.27zM24.32 27.97h1.27v1.27h-1.27zM26.75 27.97h1.27v1.27h-1.27zM29.18 27.97h1.27v1.27h-1.27zM0.00 29.18h1.27v1.27h-1.27zM1.22 29.18h1.27v1.27h-1.27zM2.43 29.18h1.27v1.27h-1.27zM3.65 29.18h1.27v1.27h-1.27zM4.86 29.18h1.27v1.27h-1.27zM6.08 29.18h1.27v1.27h-1.27zM7.30 29.18h1.27v1.27h-1.27zM9.73 29.18h1.27v1.27h-1.27zM10.94 29.18h1.27v1.27h-1.27zM12.16 29.18h1.27v1.27h-1.27zM13.38 29.18h1.27v1.27h-1.27zM14.59 29.18h1.27v1.27h-1.27zM15.81 29.18h1.27v1.27h-1.27zM17.02 29.18h1.27v1.27h-1.27zM18.24 29.18h1.27v1.27h-1.27zM23.10 29.18h1.27v1.27h-1.27zM24.32 29.18h1.27v1.27h-1.27zM26.75 29.18h1.27v1.27h-1.27zM27.97 29.18h1.27v1.27h-1.27zM29.18 29.18h1.27v1.27h-1.27z" fill="#111"/></svg>
<svg style="left:177px;top:82px" width="18" height="22" viewBox="0 0 18 22"><path d="M5.2 13.2V2A1.6 1.6 0 0 1 8.4 2V6.6A1.3 1.3 0 0 1 11 6.6V7.2A1.3 1.3 0 0 1 13.6 7.2V8A1.2 1.2 0 0 1 16 8V14.5C16 18 14.5 20.6 12 20.6H8C6 20.6 4.5 18.5 3.5 17L0.8 13.2C0.2 12 1.6 11 2.8 12L5.2 14Z" fill="#fff" stroke="#444" stroke-width="1.1" stroke-linejoin="round"/><path d="M8.4 6.6V10.2M11 7.4V10.2M13.6 8V10.2" stroke="#444" stroke-width="1"/></svg>
</body></html>
